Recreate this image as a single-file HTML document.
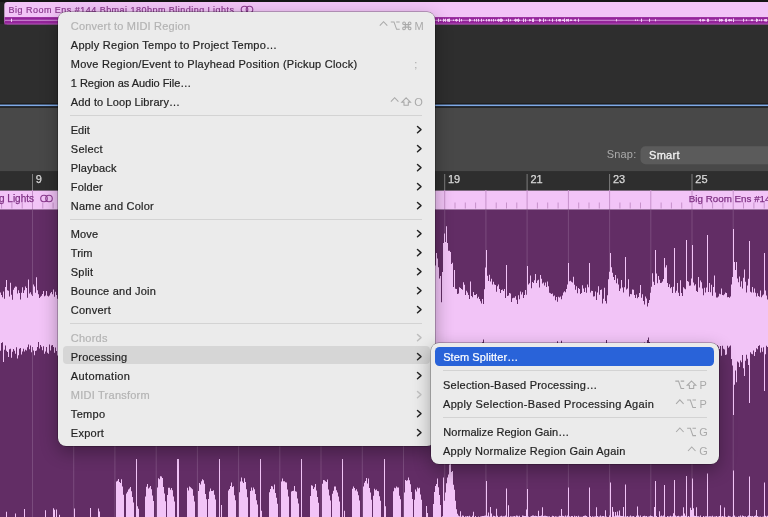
<!DOCTYPE html>
<html><head><meta charset="utf-8">
<style>
*{margin:0;padding:0;box-sizing:border-box}
html,body{width:768px;height:517px;overflow:hidden;background:#2c2c2c;font-family:"Liberation Sans",sans-serif}
.abs{position:absolute;left:0;top:0}
svg text{font-family:"Liberation Sans",sans-serif}
.menu{position:absolute;background:#ebebeb;border-radius:8px;box-shadow:0 0 0 0.5px rgba(0,0,0,0.45),0 6px 18px rgba(0,0,0,0.33)}
.hl{position:absolute;left:4.5px;right:4.5px;height:18.6px;background:#d6d6d6;border-radius:4px}
.sep{position:absolute;height:1px;background:#d3d3d3}
.blue{position:absolute;left:4px;right:4.5px;top:4.5px;height:18.7px;background:#2963d9;border-radius:4.5px}
</style></head><body>
<svg class="abs" width="768" height="517" viewBox="0 0 768 517" style="will-change:transform">
 <rect x="0" y="0" width="768" height="517" fill="#2e2e2e"/>
 <rect x="0" y="0" width="768" height="2.5" fill="#151515"/>
 <rect x="0" y="2" width="4" height="22" fill="#242424"/>
 <rect x="4.3" y="2" width="800" height="22.2" rx="3" fill="#f2c4f7"/>
 <rect x="4.5" y="17.1" width="800" height="7.2" fill="#94249a"/>
 <rect x="4.5" y="23.3" width="800" height="1" fill="#a948ae"/>
 <rect x="5" y="19.8" width="800" height="0.9" fill="#d8a0de"/>
 <g fill="#f2d2f5"><rect x="11" y="18.65" width="1" height="3.21"/><rect x="433" y="18.62" width="1" height="3.27"/><rect x="438" y="18.65" width="1" height="3.20"/><rect x="440" y="19.57" width="1" height="1.35"/><rect x="443" y="18.69" width="1" height="3.12"/><rect x="444" y="19.47" width="1" height="1.56"/><rect x="445" y="18.73" width="1" height="3.05"/><rect x="447" y="18.91" width="1" height="2.67"/><rect x="448" y="18.79" width="1" height="2.92"/><rect x="449" y="18.59" width="1" height="3.31"/><rect x="453" y="19.56" width="1" height="1.38"/><rect x="455" y="19.41" width="1" height="1.67"/><rect x="456" y="18.92" width="1" height="2.67"/><rect x="457" y="19.60" width="1" height="1.30"/><rect x="459" y="18.50" width="1" height="3.50"/><rect x="461" y="19.10" width="1" height="2.30"/><rect x="469" y="18.79" width="1" height="2.93"/><rect x="470" y="19.29" width="1" height="1.92"/><rect x="474" y="19.15" width="1" height="2.20"/><rect x="476" y="18.91" width="1" height="2.68"/><rect x="478" y="18.90" width="1" height="2.71"/><rect x="481" y="18.80" width="1" height="2.90"/><rect x="483" y="19.58" width="1" height="1.35"/><rect x="486" y="19.10" width="1" height="2.30"/><rect x="488" y="19.21" width="1" height="2.07"/><rect x="489" y="19.21" width="1" height="2.09"/><rect x="491" y="19.20" width="1" height="2.11"/><rect x="493" y="18.97" width="1" height="2.57"/><rect x="495" y="19.38" width="1" height="1.73"/><rect x="497" y="19.43" width="1" height="1.65"/><rect x="498" y="18.81" width="1" height="2.88"/><rect x="499" y="19.26" width="1" height="1.97"/><rect x="500" y="18.65" width="1" height="3.20"/><rect x="501" y="18.62" width="1" height="3.25"/><rect x="502" y="19.25" width="1" height="2.01"/><rect x="506" y="19.50" width="1" height="1.49"/><rect x="508" y="18.68" width="1" height="3.14"/><rect x="510" y="19.32" width="1" height="1.87"/><rect x="514" y="19.49" width="1" height="1.51"/><rect x="515" y="18.70" width="1" height="3.11"/><rect x="516" y="19.23" width="1" height="2.03"/><rect x="517" y="19.15" width="1" height="2.21"/><rect x="518" y="18.55" width="1" height="3.41"/><rect x="519" y="19.64" width="1" height="1.21"/><rect x="523" y="18.51" width="1" height="3.48"/><rect x="525" y="18.76" width="1" height="2.99"/><rect x="529" y="19.24" width="1" height="2.02"/><rect x="530" y="19.57" width="1" height="1.36"/><rect x="532" y="18.68" width="1" height="3.14"/><rect x="533" y="18.57" width="1" height="3.37"/><rect x="539" y="18.76" width="1" height="2.99"/><rect x="540" y="19.29" width="1" height="1.92"/><rect x="543" y="18.52" width="1" height="3.45"/><rect x="545" y="19.35" width="1" height="1.81"/><rect x="549" y="19.41" width="1" height="1.67"/><rect x="552" y="18.70" width="1" height="3.10"/><rect x="556" y="18.90" width="1" height="2.71"/><rect x="558" y="19.32" width="1" height="1.85"/><rect x="559" y="19.02" width="1" height="2.47"/><rect x="560" y="19.08" width="1" height="2.33"/><rect x="562" y="19.58" width="1" height="1.33"/><rect x="563" y="19.50" width="1" height="1.50"/><rect x="564" y="18.48" width="1" height="3.54"/><rect x="566" y="19.05" width="1" height="2.41"/><rect x="567" y="19.27" width="1" height="1.95"/><rect x="568" y="18.87" width="1" height="2.75"/><rect x="570" y="19.42" width="1" height="1.66"/><rect x="571" y="19.50" width="1" height="1.50"/><rect x="574" y="19.55" width="1" height="1.39"/><rect x="575" y="19.20" width="1" height="2.10"/><rect x="578" y="18.69" width="1" height="3.12"/><rect x="616" y="19.14" width="1" height="2.22"/><rect x="635" y="19.48" width="1" height="1.54"/><rect x="637" y="19.54" width="1" height="1.42"/><rect x="641" y="18.64" width="1" height="3.22"/><rect x="649" y="18.73" width="1" height="3.04"/><rect x="655" y="19.26" width="1" height="1.98"/><rect x="699" y="19.43" width="1" height="1.63"/><rect x="700" y="18.91" width="1" height="2.68"/><rect x="702" y="19.21" width="1" height="2.08"/><rect x="703" y="19.23" width="1" height="2.04"/><rect x="704" y="19.55" width="1" height="1.40"/><rect x="707" y="18.75" width="1" height="2.99"/><rect x="708" y="18.82" width="1" height="2.86"/><rect x="715" y="19.53" width="1" height="1.43"/><rect x="719" y="18.79" width="1" height="2.93"/><rect x="720" y="19.33" width="1" height="1.84"/><rect x="721" y="18.95" width="1" height="2.61"/><rect x="722" y="19.37" width="1" height="1.76"/><rect x="725" y="18.80" width="1" height="2.89"/><rect x="726" y="18.63" width="1" height="3.25"/><rect x="728" y="19.39" width="1" height="1.72"/><rect x="729" y="19.07" width="1" height="2.35"/><rect x="730" y="19.44" width="1" height="1.61"/><rect x="731" y="19.26" width="1" height="1.97"/><rect x="733" y="18.46" width="1" height="3.58"/><rect x="743" y="18.77" width="1" height="2.96"/><rect x="746" y="19.37" width="1" height="1.76"/><rect x="751" y="19.42" width="1" height="1.66"/><rect x="752" y="19.43" width="1" height="1.65"/><rect x="756" y="18.61" width="1" height="3.28"/><rect x="757" y="19.14" width="1" height="2.22"/><rect x="759" y="19.54" width="1" height="1.42"/><rect x="761" y="19.22" width="1" height="2.06"/><rect x="764" y="19.25" width="1" height="2.00"/><rect x="765" y="19.07" width="1" height="2.37"/><rect x="766" y="18.95" width="1" height="2.60"/></g>
 <text x="8.6" y="12.9" font-size="9" fill="#8b3a8f" stroke="#8b3a8f" stroke-width="0.2" textLength="225.4" lengthAdjust="spacing">Big Room Ens #144 Bbmaj 180bpm Blinding Lights</text>
 <g fill="none" stroke="#8b3a8f" stroke-width="1.1"><circle cx="244.5" cy="9.5" r="3.3"/><circle cx="249.5" cy="9.5" r="3.3"/></g>
 <rect x="0" y="103.6" width="768" height="4.2" fill="#0c0c0c"/>
 <rect x="0" y="104.5" width="768" height="1.7" fill="#80aae6"/>
 <rect x="0" y="107.6" width="768" height="63.8" fill="#484848"/>
 <text x="606.7" y="158.3" font-size="11" fill="#ababab" letter-spacing="0.2">Snap:</text>
 <rect x="640.5" y="146.2" width="200" height="18.1" rx="5" fill="#5b5b5b"/>
 <text x="649" y="158.6" font-size="11" fill="#f2f2f2" letter-spacing="0.3" stroke="#f2f2f2" stroke-width="0.3">Smart</text>
 <rect x="0" y="171.4" width="768" height="18.6" fill="#2e2e2e"/>
 <rect x="32.0" y="174" width="1" height="16" fill="#7d7d7d"/><text x="35.8" y="182.8" font-size="11" fill="#dadada" stroke="#dadada" stroke-width="0.25">9</text><rect x="114.4" y="174" width="1" height="16" fill="#7d7d7d"/><text x="118.2" y="182.8" font-size="11" fill="#dadada" stroke="#dadada" stroke-width="0.25">11</text><rect x="196.9" y="174" width="1" height="16" fill="#7d7d7d"/><text x="200.7" y="182.8" font-size="11" fill="#dadada" stroke="#dadada" stroke-width="0.25">13</text><rect x="279.3" y="174" width="1" height="16" fill="#7d7d7d"/><text x="283.1" y="182.8" font-size="11" fill="#dadada" stroke="#dadada" stroke-width="0.25">15</text><rect x="361.8" y="174" width="1" height="16" fill="#7d7d7d"/><text x="365.6" y="182.8" font-size="11" fill="#dadada" stroke="#dadada" stroke-width="0.25">17</text><rect x="444.2" y="174" width="1" height="16" fill="#7d7d7d"/><text x="448.0" y="182.8" font-size="11" fill="#dadada" stroke="#dadada" stroke-width="0.25">19</text><rect x="526.6" y="174" width="1" height="16" fill="#7d7d7d"/><text x="530.4" y="182.8" font-size="11" fill="#dadada" stroke="#dadada" stroke-width="0.25">21</text><rect x="609.1" y="174" width="1" height="16" fill="#7d7d7d"/><text x="612.9" y="182.8" font-size="11" fill="#dadada" stroke="#dadada" stroke-width="0.25">23</text><rect x="691.5" y="174" width="1" height="16" fill="#7d7d7d"/><text x="695.3" y="182.8" font-size="11" fill="#dadada" stroke="#dadada" stroke-width="0.25">25</text><rect x="774.0" y="174" width="1" height="16" fill="#7d7d7d"/><text x="777.8" y="182.8" font-size="11" fill="#dadada" stroke="#dadada" stroke-width="0.25">27</text>
 <rect x="0" y="190.6" width="768" height="19.1" fill="#f2c4f7"/>
 <g fill="#c691ca"><rect x="-9.2" y="190" width="1" height="19"/><rect x="1.1" y="202.5" width="1" height="6"/><rect x="11.4" y="202.5" width="1" height="6"/><rect x="21.7" y="202.5" width="1" height="6"/><rect x="32.0" y="190" width="1" height="19"/><rect x="42.3" y="202.5" width="1" height="6"/><rect x="52.6" y="202.5" width="1" height="6"/><rect x="62.9" y="202.5" width="1" height="6"/><rect x="73.2" y="190" width="1" height="19"/><rect x="83.5" y="202.5" width="1" height="6"/><rect x="93.8" y="202.5" width="1" height="6"/><rect x="104.1" y="202.5" width="1" height="6"/><rect x="114.4" y="190" width="1" height="19"/><rect x="124.7" y="202.5" width="1" height="6"/><rect x="135.1" y="202.5" width="1" height="6"/><rect x="145.4" y="202.5" width="1" height="6"/><rect x="155.7" y="190" width="1" height="19"/><rect x="166.0" y="202.5" width="1" height="6"/><rect x="176.3" y="202.5" width="1" height="6"/><rect x="186.6" y="202.5" width="1" height="6"/><rect x="196.9" y="190" width="1" height="19"/><rect x="207.2" y="202.5" width="1" height="6"/><rect x="217.5" y="202.5" width="1" height="6"/><rect x="227.8" y="202.5" width="1" height="6"/><rect x="238.1" y="190" width="1" height="19"/><rect x="248.4" y="202.5" width="1" height="6"/><rect x="258.7" y="202.5" width="1" height="6"/><rect x="269.0" y="202.5" width="1" height="6"/><rect x="279.3" y="190" width="1" height="19"/><rect x="289.6" y="202.5" width="1" height="6"/><rect x="299.9" y="202.5" width="1" height="6"/><rect x="310.2" y="202.5" width="1" height="6"/><rect x="320.5" y="190" width="1" height="19"/><rect x="330.8" y="202.5" width="1" height="6"/><rect x="341.1" y="202.5" width="1" height="6"/><rect x="351.5" y="202.5" width="1" height="6"/><rect x="361.8" y="190" width="1" height="19"/><rect x="372.1" y="202.5" width="1" height="6"/><rect x="382.4" y="202.5" width="1" height="6"/><rect x="392.7" y="202.5" width="1" height="6"/><rect x="403.0" y="190" width="1" height="19"/><rect x="413.3" y="202.5" width="1" height="6"/><rect x="423.6" y="202.5" width="1" height="6"/><rect x="433.9" y="202.5" width="1" height="6"/><rect x="444.2" y="190" width="1" height="19"/><rect x="454.5" y="202.5" width="1" height="6"/><rect x="464.8" y="202.5" width="1" height="6"/><rect x="475.1" y="202.5" width="1" height="6"/><rect x="485.4" y="190" width="1" height="19"/><rect x="495.7" y="202.5" width="1" height="6"/><rect x="506.0" y="202.5" width="1" height="6"/><rect x="516.3" y="202.5" width="1" height="6"/><rect x="526.6" y="190" width="1" height="19"/><rect x="536.9" y="202.5" width="1" height="6"/><rect x="547.2" y="202.5" width="1" height="6"/><rect x="557.6" y="202.5" width="1" height="6"/><rect x="567.9" y="190" width="1" height="19"/><rect x="578.2" y="202.5" width="1" height="6"/><rect x="588.5" y="202.5" width="1" height="6"/><rect x="598.8" y="202.5" width="1" height="6"/><rect x="609.1" y="190" width="1" height="19"/><rect x="619.4" y="202.5" width="1" height="6"/><rect x="629.7" y="202.5" width="1" height="6"/><rect x="640.0" y="202.5" width="1" height="6"/><rect x="650.3" y="190" width="1" height="19"/><rect x="660.6" y="202.5" width="1" height="6"/><rect x="670.9" y="202.5" width="1" height="6"/><rect x="681.2" y="202.5" width="1" height="6"/><rect x="691.5" y="190" width="1" height="19"/><rect x="701.8" y="202.5" width="1" height="6"/><rect x="712.1" y="202.5" width="1" height="6"/><rect x="722.4" y="202.5" width="1" height="6"/><rect x="732.7" y="190" width="1" height="19"/><rect x="743.0" y="202.5" width="1" height="6"/><rect x="753.4" y="202.5" width="1" height="6"/><rect x="763.7" y="202.5" width="1" height="6"/><rect x="774.0" y="190" width="1" height="19"/><rect x="784.3" y="202.5" width="1" height="6"/><rect x="794.6" y="202.5" width="1" height="6"/><rect x="804.9" y="202.5" width="1" height="6"/></g>
 <text x="-1" y="202.3" font-size="10" fill="#7f3084" stroke="#7f3084" stroke-width="0.25">g Lights</text>
 <g fill="none" stroke="#8b3a8f" stroke-width="1.1"><circle cx="44" cy="198.5" r="3.3"/><circle cx="49" cy="198.5" r="3.3"/></g>
 <text x="688.8" y="202.3" font-size="9.8" fill="#7f3084" stroke="#7f3084" stroke-width="0.25" >Big Room Ens #144</text>
 <rect x="0" y="209.7" width="768" height="308" fill="#622d65"/>
 <g fill="#7a4b7d"><rect x="-9.2" y="209.7" width="1" height="308"/><rect x="32.0" y="209.7" width="1" height="308"/><rect x="73.2" y="209.7" width="1" height="308"/><rect x="114.4" y="209.7" width="1" height="308"/><rect x="155.7" y="209.7" width="1" height="308"/><rect x="196.9" y="209.7" width="1" height="308"/><rect x="238.1" y="209.7" width="1" height="308"/><rect x="279.3" y="209.7" width="1" height="308"/><rect x="320.5" y="209.7" width="1" height="308"/><rect x="361.8" y="209.7" width="1" height="308"/><rect x="403.0" y="209.7" width="1" height="308"/><rect x="444.2" y="209.7" width="1" height="308"/><rect x="485.4" y="209.7" width="1" height="308"/><rect x="526.6" y="209.7" width="1" height="308"/><rect x="567.9" y="209.7" width="1" height="308"/><rect x="609.1" y="209.7" width="1" height="308"/><rect x="650.3" y="209.7" width="1" height="308"/><rect x="691.5" y="209.7" width="1" height="308"/><rect x="732.7" y="209.7" width="1" height="308"/><rect x="774.0" y="209.7" width="1" height="308"/></g>
 <path d="M0 292.5H1V295.0H2V297.3H3V291.5H4V298.7H5V287.1H6V280.1H7V290.2H8V290.7H9V296.5H10V282.7H11V294.8H12V299.7H13V289.7H14V287.8H15V286.5H16V286.8H17V293.5H18V290.2H19V293.1H20V299.5H21V292.7H22V287.2H23V292.9H24V290.2H25V286.6H26V288.1H27V297.7H28V279.4H29V293.5H30V292.3H31V294.5H32V296.0H33V284.4H34V286.4H35V292.8H36V277.3H37V290.3H38V294.2H39V297.9H40V296.7H41V295.8H42V293.9H43V290.9H44V296.2H45V295.6H46V291.0H47V295.8H48V296.6H49V295.5H50V293.3H51V291.9H52V294.3H53V289.5H54V296.8H55V291.8H56V295.1H57V298.8H58V299.5H59V297.5H60V292.7H61V289.2H62V294.5H63V299.0H64V290.7H65V296.6H66V296.6H67V298.7H68V297.2H69V294.7H70V289.1H71V297.6H72V292.3H73V297.4H74V271.4H75V268.7H76V274.9H77V275.2H78V265.6H79V271.5H80V293.5H81V299.6H82V300.3H83V296.8H84V297.7H85V296.7H86V291.6H87V300.8H88V295.4H89V292.8H90V299.3H91V290.0H92V295.6H93V294.8H94V298.7H95V298.6H96V293.0H97V290.7H98V295.2H99V299.1H100V300.3H101V300.4H102V291.7H103V292.5H104V296.7H105V299.1H106V292.7H107V299.1H108V291.5H109V300.6H110V295.9H111V295.4H112V296.3H113V300.6H114V293.8H115V270.8H116V272.3H117V270.5H118V275.5H119V267.2H120V265.5H121V298.8H122V294.7H123V291.3H124V300.1H125V298.4H126V291.3H127V297.2H128V293.3H129V290.3H130V290.5H131V292.0H132V295.4H133V293.5H134V295.4H135V291.5H136V296.7H137V299.2H138V299.3H139V297.9H140V299.8H141V292.8H142V291.6H143V299.7H144V291.9H145V292.1H146V299.0H147V298.5H148V293.8H149V289.2H150V297.2H151V300.6H152V295.1H153V295.0H154V291.3H155V290.3H156V295.6H157V270.8H158V266.2H159V274.1H160V275.1H161V264.7H162V269.5H163V292.9H164V295.2H165V296.2H166V297.4H167V291.2H168V297.9H169V291.3H170V295.2H171V299.7H172V297.5H173V296.6H174V296.2H175V300.8H176V292.1H177V297.9H178V298.8H179V299.8H180V297.3H181V298.2H182V297.7H183V293.1H184V289.1H185V296.7H186V291.8H187V297.0H188V296.9H189V295.4H190V301.0H191V297.4H192V300.8H193V296.4H194V292.1H195V289.6H196V293.5H197V292.0H198V270.6H199V275.6H200V275.9H201V273.7H202V271.2H203V264.5H204V290.9H205V291.0H206V296.3H207V300.3H208V295.3H209V293.4H210V296.9H211V292.4H212V292.6H213V291.9H214V290.9H215V293.7H216V298.0H217V300.9H218V289.9H219V294.2H220V300.7H221V295.3H222V297.7H223V300.7H224V296.2H225V296.5H226V291.4H227V295.3H228V294.3H229V294.5H230V296.0H231V298.3H232V301.0H233V297.8H234V290.4H235V298.4H236V293.3H237V297.2H238V296.1H239V273.0H240V267.0H241V275.0H242V264.5H243V267.3H244V271.5H245V295.5H246V290.0H247V295.6H248V293.5H249V291.5H250V297.9H251V289.9H252V298.7H253V298.2H254V294.1H255V298.7H256V296.8H257V292.9H258V298.0H259V294.1H260V290.2H261V289.9H262V295.8H263V297.2H264V298.3H265V291.6H266V290.0H267V297.7H268V292.4H269V293.3H270V293.4H271V297.5H272V300.0H273V300.0H274V298.6H275V292.8H276V300.2H277V292.0H278V293.4H279V293.7H280V266.3H281V273.6H282V274.0H283V266.1H284V274.6H285V264.3H286V295.5H287V300.6H288V298.7H289V295.6H290V290.0H291V297.8H292V290.0H293V290.7H294V296.8H295V291.6H296V295.3H297V293.7H298V300.6H299V294.9H300V297.7H301V300.0H302V298.9H303V299.2H304V299.0H305V300.5H306V295.3H307V298.6H308V294.0H309V297.9H310V293.5H311V291.5H312V292.5H313V289.7H314V290.4H315V298.3H316V289.7H317V296.0H318V289.4H319V291.2H320V291.8H321V296.1H322V266.2H323V266.1H324V267.7H325V273.8H326V267.1H327V275.0H328V295.6H329V294.8H330V289.6H331V298.6H332V295.3H333V292.3H334V296.9H335V289.1H336V293.5H337V297.6H338V290.9H339V292.9H340V299.4H341V296.6H342V292.2H343V290.8H344V289.0H345V299.2H346V290.0H347V297.6H348V294.8H349V300.5H350V299.3H351V298.5H352V300.0H353V298.9H354V295.5H355V290.9H356V292.7H357V289.9H358V294.6H359V293.3H360V290.3H361V294.5H362V299.0H363V264.1H364V272.5H365V270.8H366V264.1H367V273.6H368V271.4H369V293.5H370V292.6H371V293.7H372V292.1H373V297.8H374V300.3H375V297.7H376V298.9H377V290.7H378V297.1H379V291.2H380V299.0H381V290.1H382V290.9H383V293.9H384V300.0H385V295.1H386V298.2H387V293.6H388V293.9H389V293.8H390V300.8H391V296.9H392V289.2H393V293.1H394V290.3H395V295.1H396V298.9H397V290.9H398V299.8H399V293.2H400V290.7H401V300.8H402V297.6H403V291.4H404V271.5H405V265.0H406V270.9H407V268.0H408V268.3H409V265.5H410V290.6H411V295.5H412V295.7H413V299.9H414V298.8H415V290.5H416V292.5H417V291.9H418V299.0H419V295.6H420V289.4H421V300.8H422V296.9H423V297.1H424V293.6H425V298.6H426V291.4H427V290.7H428V295.8H429V295.2H430V295.8H431V296.7H432V297.1H433V300.5H434V294.7H435V265.6H436V253.0H437V258.6H438V267.3H439V278.6H440V276.0H441V302.3H442V272.0H443V243.0H444V233.4H445V242.1H446V226.2H447V243.0H448V250.7H449V250.7H450V252.0H451V264.0H452V262.8H453V287.0H454V269.9H455V288.8H456V289.0H457V293.9H458V293.4H459V287.2H460V287.9H461V289.0H462V289.8H463V282.3H464V284.7H465V295.0H466V290.7H467V292.5H468V295.1H469V298.9H470V281.6H471V295.9H472V297.2H473V292.0H474V294.9H475V294.9H476V294.0H477V298.2H478V296.7H479V299.1H480V301.3H481V303.6H482V299.1H483V304.1H484V289.2H485V267.4H486V250.0H487V275.8H488V280.9H489V274.8H490V281.4H491V278.8H492V284.6H493V281.8H494V284.5H495V285.1H496V291.8H497V286.3H498V284.6H499V289.1H500V292.9H501V289.9H502V289.4H503V290.9H504V288.9H505V298.1H506V265.0H507V296.1H508V295.4H509V292.9H510V293.6H511V302.0H512V298.3H513V297.8H514V297.8H515V296.3H516V299.7H517V304.0H518V295.2H519V299.2H520V291.5H521V294.4H522V292.2H523V298.0H524V295.0H525V290.0H526V294.7H527V266.0H528V284.4H529V283.3H530V275.4H531V288.3H532V282.0H533V283.1H534V280.3H535V273.9H536V282.9H537V280.4H538V279.8H539V287.4H540V275.0H541V278.8H542V283.4H543V282.6H544V285.5H545V282.4H546V287.0H547V281.5H548V286.2H549V292.8H550V293.3H551V294.0H552V293.6H553V296.2H554V295.6H555V300.2H556V297.1H557V301.8H558V296.7H559V297.6H560V296.5H561V299.3H562V295.4H563V292.4H564V291.2H565V292.2H566V288.9H567V284.5H568V263.0H569V281.3H570V280.7H571V281.7H572V282.5H573V276.8H574V284.7H575V289.8H576V286.3H577V293.2H578V287.9H579V288.9H580V294.0H581V292.9H582V285.2H583V288.4H584V292.1H585V287.7H586V292.8H587V284.4H588V287.2H589V263.0H590V292.4H591V290.7H592V291.0H593V296.5H594V296.3H595V291.5H596V299.9H597V292.4H598V286.2H599V294.7H600V290.0H601V289.6H602V303.6H603V298.8H604V287.8H605V300.9H606V303.6H607V295.3H608V279.3H609V271.7H610V253.0H611V267.3H612V272.7H613V277.0H614V280.1H615V275.0H616V283.3H617V278.6H618V284.5H619V290.9H620V288.5H621V280.1H622V287.5H623V292.4H624V287.2H625V257.0H626V289.4H627V288.4H628V279.3H629V296.4H630V294.1H631V294.2H632V289.6H633V289.7H634V295.0H635V297.9H636V294.4H637V298.2H638V296.9H639V292.9H640V284.9H641V297.8H642V294.3H643V301.0H644V304.4H645V296.6H646V298.6H647V306.5H648V303.1H649V300.0H650V292.7H651V286.7H652V273.3H653V281.8H654V284.9H655V250.0H656V273.5H657V283.3H658V275.9H659V279.7H660V282.9H661V282.7H662V281.5H663V279.1H664V258.0H665V267.4H666V265.3H667V282.9H668V287.1H669V284.2H670V288.3H671V286.9H672V293.0H673V286.8H674V248.0H675V292.8H676V290.7H677V282.9H678V292.8H679V296.1H680V280.2H681V293.0H682V296.0H683V287.2H684V288.6H685V289.2H686V240.0H687V281.1H688V281.7H689V285.8H690V285.5H691V278.6H692V245.0H693V282.5H694V285.4H695V284.3H696V291.1H697V292.1H698V276.9H699V287.4H700V280.4H701V282.2H702V288.5H703V295.2H704V287.7H705V292.6H706V287.6H707V235.0H708V291.9H709V283.0H710V292.3H711V284.7H712V295.7H713V287.0H714V275.4H715V292.4H716V297.5H717V297.5H718V296.4H719V293.8H720V294.3H721V288.6H722V295.0H723V295.2H724V294.3H725V292.6H726V293.1H727V297.2H728V297.0H729V297.7H730V296.6H731V284.4H732V276.9H733V229.0H734V261.9H735V270.0H736V262.1H737V278.6H738V282.2H739V276.5H740V286.8H741V281.2H742V288.5H743V277.7H744V269.4H745V281.8H746V292.5H747V285.6H748V278.7H749V241.0H750V291.7H751V292.4H752V287.1H753V292.4H754V288.6H755V292.7H756V296.4H757V293.3H758V296.0H759V296.8H760V290.6H761V297.2H762V295.6H763V294.6H764V253.0H765V290.4H766V295.5H767V299.5H768V346.9H767V345.7H766V354.2H765V391.0H764V347.3H763V351.7H762V347.8H761V352.4H760V345.3H759V346.1H758V349.3H757V348.2H756V351.9H755V356.1H754V350.4H753V354.3H752V353.8H751V352.2H750V403.0H749V365.1H748V358.7H747V354.8H746V360.7H745V376.0H744V368.2H743V355.1H742V362.3H741V360.5H740V366.9H739V362.4H738V361.6H737V382.3H736V370.4H735V384.7H734V415.0H733V365.4H732V359.0H731V345.4H730V346.5H729V347.7H728V345.8H727V354.6H726V355.1H725V349.6H724V348.7H723V345.8H722V355.8H721V346.1H720V349.1H719V346.5H718V344.9H717V346.5H716V354.7H715V367.2H714V353.7H713V351.1H712V357.7H711V348.9H710V363.6H709V355.8H708V409.0H707V353.6H706V354.2H705V355.9H704V348.1H703V353.9H702V358.8H701V362.0H700V356.9H699V370.6H698V348.9H697V355.4H696V360.7H695V355.2H694V358.6H693V399.0H692V364.6H691V360.2H690V357.3H689V366.1H688V361.4H687V404.0H686V358.0H685V357.1H684V353.5H683V348.4H682V353.6H681V361.9H680V345.8H679V349.5H678V359.4H677V354.1H676V354.7H675V396.0H674V355.5H673V352.6H672V357.2H671V358.2H670V357.0H669V355.8H668V365.1H667V379.6H666V376.4H665V386.0H664V365.9H663V358.6H662V358.9H661V362.2H660V360.8H659V370.9H658V357.6H657V369.3H656V394.0H655V359.5H654V364.6H653V373.0H652V355.6H651V351.6H650V342.0H649V337.4H648V339.9H647V346.6H646V347.3H645V342.5H644V344.9H643V353.7H642V349.6H641V358.7H640V351.7H639V346.2H638V345.5H637V346.5H636V347.2H635V349.9H634V353.3H633V358.3H632V348.4H631V348.1H630V346.8H629V364.2H628V354.1H627V358.2H626V387.0H625V356.2H624V348.4H623V356.9H622V365.9H621V358.7H620V354.2H619V360.8H618V363.2H617V364.0H616V368.2H615V367.8H614V369.5H613V373.7H612V372.8H611V391.0H610V374.3H609V361.7H608V346.1H607V339.9H606V346.6H605V357.5H604V347.6H603V343.3H602V354.3H601V357.2H600V348.3H599V356.0H598V347.8H597V344.0H596V349.4H595V350.1H594V346.7H593V353.9H592V356.0H591V350.6H590V381.0H589V358.7H588V356.6H587V354.7H586V355.7H585V355.7H584V351.7H583V360.2H582V353.8H581V349.4H580V357.9H579V354.7H578V352.5H577V357.8H576V357.1H575V361.5H574V368.9H573V358.5H572V360.9H571V363.6H570V361.6H569V381.0H568V363.3H567V356.9H566V350.6H565V355.4H564V351.9H563V346.5H562V340.7H561V345.3H560V350.2H559V347.3H558V341.3H557V345.1H556V344.8H555V351.9H554V351.4H553V347.9H552V350.6H551V346.9H550V351.0H549V354.2H548V361.4H547V357.4H546V358.8H545V355.3H544V358.7H543V357.9H542V363.8H541V368.1H540V354.5H539V365.6H538V367.0H537V364.9H536V371.1H535V362.5H534V363.9H533V363.7H532V352.9H531V366.7H530V360.1H529V360.4H528V378.0H527V351.4H526V350.6H525V345.2H524V348.1H523V349.0H522V351.3H521V350.5H520V343.0H519V345.4H518V342.9H517V343.9H516V345.4H515V346.6H514V343.9H513V348.5H512V345.1H511V352.0H510V352.3H509V349.5H508V346.8H507V379.0H506V343.7H505V359.1H504V351.5H503V357.7H502V356.0H501V355.0H500V351.3H499V358.4H498V360.3H497V350.2H496V355.6H495V359.7H494V358.6H493V357.3H492V365.7H491V365.0H490V368.7H489V360.3H488V368.8H487V394.0H486V374.4H485V357.1H484V339.4H483V342.2H482V344.0H481V345.4H480V347.1H479V348.4H478V345.8H477V352.0H476V353.0H475V349.5H474V354.0H473V344.8H472V344.5H471V362.0H470V343.4H469V347.3H468V354.6H467V355.6H466V346.4H465V357.7H464V365.2H463V357.1H462V356.8H461V353.6H460V360.8H459V350.3H458V347.7H457V353.4H456V359.0H455V372.6H454V357.7H453V383.7H452V378.4H451V395.6H450V390.1H449V395.3H448V401.0H447V421.5H446V401.1H445V410.9H444V401.0H443V368.5H442V343.7H441V371.3H440V368.7H439V376.9H438V384.9H437V391.0H436V380.5H435V350.3H434V344.5H433V343.4H432V342.7H431V346.5H430V346.4H429V344.9H428V352.1H427V352.3H426V340.5H425V351.3H424V349.3H423V345.2H422V347.6H421V351.4H420V344.2H419V341.9H418V352.8H417V355.5H416V356.8H415V346.2H414V349.0H413V345.9H412V349.1H411V357.4H410V383.2H409V375.3H408V380.3H407V375.1H406V376.4H405V369.5H404V357.1H403V349.8H402V343.3H401V355.4H400V350.8H399V344.6H398V355.8H397V346.2H396V351.8H395V352.5H394V352.4H393V353.1H392V348.2H391V346.1H390V352.2H389V345.2H388V348.7H387V349.0H386V350.3H385V343.2H384V345.8H383V349.4H382V351.2H381V345.9H380V351.9H379V349.0H378V349.3H377V341.0H376V344.6H375V344.3H374V344.5H373V348.9H372V352.0H371V349.8H370V350.9H369V370.5H368V367.5H367V384.8H366V372.8H365V368.9H364V378.6H363V346.6H362V354.1H361V352.7H360V352.6H359V351.5H358V352.1H357V349.4H356V356.4H355V348.7H354V342.2H353V339.9H352V344.7H351V342.7H350V344.4H349V348.9H348V342.4H347V351.7H346V348.1H345V358.2H344V355.9H343V352.1H342V352.3H341V344.7H340V348.7H339V349.7H338V347.5H337V353.5H336V354.6H335V344.5H334V356.6H333V348.8H332V344.2H331V358.9H330V346.4H329V353.0H328V367.4H327V380.7H326V370.0H325V376.7H324V380.5H323V375.6H322V345.1H321V354.3H320V350.0H319V350.7H318V352.1H317V353.8H316V342.5H315V355.1H314V352.4H313V356.2H312V351.8H311V347.2H310V351.0H309V346.4H308V344.6H307V350.8H306V344.9H305V348.9H304V347.8H303V346.8H302V343.1H301V348.4H300V349.4H299V345.1H298V348.6H297V351.4H296V355.0H295V344.7H294V355.7H293V355.3H292V350.1H291V349.8H290V351.3H289V341.0H288V344.9H287V349.1H286V379.9H285V367.2H284V380.5H283V370.6H282V370.8H281V378.3H280V349.1H279V349.2H278V350.6H277V347.7H276V350.2H275V343.4H274V343.4H273V348.4H272V347.2H271V346.8H270V353.0H269V348.0H268V348.2H267V352.1H266V354.1H265V341.5H264V344.8H263V348.1H262V349.9H261V357.6H260V348.6H259V350.3H258V351.6H257V352.0H256V344.0H255V347.5H254V342.9H253V346.5H252V350.3H251V349.4H250V350.9H249V350.3H248V349.7H247V355.7H246V344.2H245V368.5H244V376.0H243V375.1H242V372.8H241V381.8H240V367.9H239V349.2H238V347.4H237V348.4H236V346.8H235V357.6H234V343.6H233V347.6H232V346.0H231V347.2H230V347.2H229V351.4H228V344.9H227V348.1H226V347.1H225V343.9H224V346.4H223V346.0H222V353.1H221V340.8H220V349.6H219V358.2H218V347.6H217V341.5H216V354.3H215V355.7H214V347.5H213V346.6H212V353.8H211V347.7H210V348.5H209V349.7H208V342.9H207V343.3H206V352.9H205V352.8H204V383.8H203V375.4H202V366.0H201V369.4H200V369.1H199V373.5H198V356.0H197V346.5H196V351.3H195V350.9H194V350.0H193V338.5H192V349.2H191V344.4H190V347.5H189V347.8H188V345.4H187V356.7H186V348.6H185V353.4H184V350.6H183V342.0H182V344.9H181V349.3H180V348.0H179V344.3H178V348.8H177V356.0H176V346.3H175V347.8H174V346.5H173V350.2H172V347.3H171V344.0H170V349.3H169V345.2H168V352.4H167V350.0H166V342.9H165V348.1H164V350.7H163V377.1H162V383.8H161V364.8H160V374.8H159V374.8H158V369.6H157V348.5H156V349.1H155V348.4H154V350.8H153V351.5H152V339.5H151V350.9H150V351.8H149V352.0H148V341.8H147V344.2H146V347.9H145V354.4H144V340.7H143V357.4H142V355.4H141V342.3H140V349.2H139V342.0H138V345.9H137V347.6H136V353.9H135V345.2H134V349.6H133V348.0H132V349.0H131V353.6H130V356.1H129V351.9H128V345.0H127V349.9H126V340.9H125V340.2H124V353.9H123V347.5H122V349.2H121V377.8H120V376.5H119V372.8H118V372.7H117V367.4H116V373.2H115V353.2H114V343.5H113V343.0H112V348.6H111V345.1H110V343.6H109V356.0H108V348.9H107V350.1H106V345.5H105V347.6H104V353.8H103V352.6H102V339.5H101V343.6H100V346.8H99V351.0H98V349.8H97V353.9H96V342.1H95V340.9H94V344.4H93V351.1H92V353.4H91V343.2H90V355.3H89V351.5H88V348.0H87V356.4H86V349.5H85V349.5H84V344.2H83V343.3H82V347.4H81V351.2H80V376.6H79V378.0H78V371.0H77V365.0H76V378.2H75V375.2H74V346.8H73V350.2H72V343.2H71V354.6H70V346.1H69V343.8H68V349.9H67V349.0H66V346.9H65V348.8H64V342.4H63V344.8H62V351.1H61V354.2H60V347.2H59V339.9H58V355.6H57V350.9H56V347.4H55V352.7H54V346.9H53V345.0H52V345.4H51V350.6H50V344.6H49V353.7H48V352.8H47V347.0H46V351.4H45V353.8H44V346.3H43V350.3H42V346.8H41V345.0H40V348.4H39V342.0H38V347.0H37V350.6H36V350.9H35V355.2H34V350.6H33V347.0H32V352.3H31V345.6H30V349.3H29V344.4H28V347.2H27V350.4H26V349.8H25V351.4H24V348.7H23V351.4H22V354.4H21V348.0H20V348.7H19V355.3H18V358.4H17V347.2H16V353.8H15V350.7H14V349.0H13V351.8H12V357.7H11V348.8H10V349.3H9V356.9H8V351.9H7V350.7H6V345.6H5V349.7H4V362.0H3V342.2H2V342.9H1V350.7H0Z" fill="#f2c4f7"/>
 <path d="M0 520V517.0H1V517.0H2V517.0H3V517.0H4V517.0H5V517.0H6V511.7H7V517.0H8V517.0H9V517.0H10V517.0H11V517.0H12V517.0H13V517.0H14V517.0H15V513.5H16V517.0H17V517.0H18V517.0H19V517.0H20V517.0H21V517.0H22V517.0H23V517.0H24V508.9H25V517.0H26V517.0H27V517.0H28V517.0H29V517.0H30V517.0H31V517.0H32V517.0H33V517.0H34V517.0H35V517.0H36V517.0H37V517.0H38V517.0H39V517.0H40V517.0H41V517.0H42V517.0H43V517.0H44V517.0H45V510.3H46V517.0H47V517.0H48V517.0H49V517.0H50V517.0H51V517.0H52V517.0H53V508.2H54V509.8H55V517.0H56V509.5H57V517.0H58V517.0H59V514.7H60V517.0H61V517.0H62V517.0H63V517.0H64V517.0H65V517.0H66V517.0H67V517.0H68V517.0H69V517.0H70V517.0H71V517.0H72V517.0H73V517.0H74V508.4H75V517.0H76V517.0H77V517.0H78V517.0H79V517.0H80V517.0H81V517.0H82V517.0H83V517.0H84V517.0H85V517.0H86V517.0H87V517.0H88V517.0H89V517.0H90V508.1H91V517.0H92V517.0H93V517.0H94V517.0H95V517.0H96V517.0H97V517.0H98V508.6H99V511.5H100V517.0H101V517.0H102V517.0H103V517.0H104V517.0H105V517.0H106V517.0H107V517.0H108V517.0H109V517.0H110V517.0H111V517.0H112V517.0H113V517.0H114V517.0H115V517.0H116V481.6H117V480.7H118V479.1H119V482.0H120V483.0H121V479.3H122V486.6H123V494.8H124V517.0H125V517.0H126V493.6H127V491.8H128V489.4H129V488.5H130V487.1H131V491.3H132V497.0H133V502.4H134V517.0H135V517.0H136V459.0H137V506.3H138V508.7H139V517.0H140V517.0H141V517.0H142V517.0H143V517.0H144V517.0H145V496.4H146V486.8H147V483.9H148V488.5H149V487.6H150V486.1H151V489.2H152V495.6H153V501.1H154V517.0H155V517.0H156V517.0H157V487.4H158V478.2H159V479.3H160V476.3H161V476.6H162V477.9H163V487.0H164V493.6H165V501.2H166V517.0H167V494.9H168V487.7H169V487.8H170V489.8H171V487.9H172V490.2H173V496.5H174V501.5H175V517.0H176V517.0H177V459.0H178V459.0H179V517.0H180V517.0H181V517.0H182V517.0H183V517.0H184V517.0H185V517.0H186V517.0H187V487.7H188V490.4H189V486.4H190V487.3H191V488.2H192V489.3H193V495.7H194V501.5H195V517.0H196V517.0H197V517.0H198V491.0H199V483.0H200V484.5H201V481.2H202V479.2H203V480.3H204V483.7H205V494.0H206V499.2H207V517.0H208V498.9H209V491.4H210V488.6H211V491.1H212V491.1H213V490.3H214V494.8H215V499.5H216V517.0H217V517.0H218V517.0H219V459.0H220V517.0H221V505.1H222V517.0H223V517.0H224V517.0H225V517.0H226V517.0H227V517.0H228V490.4H229V488.9H230V486.0H231V482.4H232V486.9H233V486.3H234V495.3H235V500.2H236V517.0H237V517.0H238V517.0H239V492.2H240V481.6H241V477.5H242V481.4H243V483.0H244V478.3H245V481.9H246V489.2H247V497.2H248V517.0H249V517.0H250V490.9H251V487.4H252V490.6H253V487.4H254V489.3H255V494.0H256V500.3H257V504.6H258V517.0H259V517.0H260V459.0H261V510.8H262V517.0H263V517.0H264V517.0H265V517.0H266V517.0H267V517.0H268V517.0H269V492.3H270V489.0H271V486.0H272V486.6H273V489.3H274V484.5H275V493.1H276V497.7H277V503.7H278V517.0H279V517.0H280V517.0H281V481.5H282V478.4H283V481.3H284V481.3H285V482.3H286V482.5H287V489.4H288V496.4H289V517.0H290V517.0H291V491.5H292V491.0H293V490.8H294V486.0H295V491.2H296V491.7H297V498.4H298V503.5H299V517.0H300V517.0H301V459.0H302V517.0H303V517.0H304V517.0H305V517.0H306V517.0H307V517.0H308V517.0H309V517.0H310V495.9H311V485.3H312V485.8H313V489.1H314V487.2H315V483.9H316V490.4H317V496.9H318V502.8H319V517.0H320V517.0H321V517.0H322V483.8H323V480.0H324V480.2H325V481.2H326V481.9H327V479.5H328V489.6H329V495.4H330V500.5H331V517.0H332V493.7H333V490.7H334V486.6H335V486.5H336V490.2H337V492.5H338V496.5H339V501.5H340V517.0H341V517.0H342V459.0H343V517.0H344V510.8H345V517.0H346V517.0H347V517.0H348V517.0H349V517.0H350V517.0H351V517.0H352V488.8H353V486.6H354V487.9H355V490.5H356V489.2H357V491.6H358V495.3H359V500.6H360V517.0H361V517.0H362V517.0H363V486.4H364V482.8H365V480.9H366V478.1H367V483.4H368V478.6H369V487.9H370V492.6H371V499.7H372V517.0H373V495.8H374V488.8H375V490.3H376V489.6H377V490.9H378V491.3H379V496.2H380V500.7H381V517.0H382V517.0H383V517.0H384V459.0H385V506.2H386V517.0H387V517.0H388V517.0H389V517.0H390V517.0H391V517.0H392V517.0H393V491.3H394V487.8H395V488.2H396V486.4H397V487.6H398V487.4H399V495.8H400V499.3H401V517.0H402V517.0H403V517.0H404V492.5H405V480.1H406V480.8H407V480.2H408V477.6H409V480.2H410V484.3H411V492.1H412V499.0H413V517.0H414V499.8H415V489.6H416V491.4H417V487.4H418V488.4H419V487.7H420V494.5H421V499.8H422V517.0H423V517.0H424V517.0H425V517.0H426V505.9H427V512.9H428V517.0H429V517.0H430V517.0H431V517.0H432V517.0H433V504.0H434V491.9H435V486.0H436V484.0H437V478.6H438V487.2H439V495.1H440V505.0H441V517.0H442V516.3H443V477.5H444V500.8H445V492.6H446V483.2H447V477.5H448V474.5H449V464.4H450V464.0H451V471.9H452V471.1H453V484.7H454V489.7H455V500.7H456V509.2H457V513.7H458V515.5H459V516.2H460V511.2H461V516.8H462V515.6H463V515.7H464V517.0H465V516.3H466V516.4H467V515.9H468V516.5H469V515.8H470V516.8H471V516.9H472V515.8H473V511.8H474V516.9H475V516.1H476V516.9H477V516.9H478V516.6H479V516.9H480V516.5H481V516.2H482V516.0H483V516.1H484V515.8H485V515.6H486V481.0H487V515.8H488V512.5H489V516.6H490V507.1H491V513.5H492V516.8H493V515.7H494V516.1H495V516.4H496V508.7H497V515.8H498V516.9H499V516.7H500V516.3H501V515.8H502V516.5H503V516.3H504V516.3H505V515.6H506V488.5H507V516.8H508V505.2H509V517.0H510V516.3H511V516.4H512V516.6H513V516.2H514V515.9H515V516.5H516V515.5H517V515.7H518V516.4H519V515.8H520V516.9H521V516.9H522V515.6H523V515.8H524V516.0H525V516.1H526V509.4H527V489.0H528V516.4H529V517.0H530V516.4H531V515.9H532V515.5H533V515.6H534V516.0H535V515.8H536V516.1H537V516.2H538V510.8H539V516.1H540V515.9H541V515.6H542V507.2H543V516.0H544V515.7H545V515.7H546V516.1H547V516.2H548V516.6H549V516.2H550V517.0H551V516.7H552V515.7H553V516.1H554V516.8H555V516.2H556V516.4H557V516.7H558V516.6H559V515.7H560V516.1H561V508.9H562V515.8H563V515.9H564V516.4H565V515.6H566V516.6H567V515.6H568V487.5H569V516.2H570V516.7H571V516.1H572V516.0H573V516.9H574V515.7H575V516.5H576V516.0H577V516.7H578V515.7H579V516.8H580V516.8H581V516.8H582V516.8H583V515.9H584V515.8H585V515.6H586V516.1H587V516.8H588V516.9H589V487.5H590V516.0H591V516.9H592V516.2H593V516.8H594V516.4H595V516.3H596V507.2H597V515.9H598V516.8H599V516.5H600V515.6H601V516.6H602V516.0H603V516.1H604V516.5H605V510.2H606V516.6H607V516.9H608V516.9H609V515.5H610V482.5H611V516.9H612V507.1H613V511.7H614V516.3H615V512.0H616V515.5H617V511.5H618V515.6H619V510.5H620V515.8H621V516.1H622V516.0H623V507.1H624V516.4H625V484.5H626V516.4H627V515.9H628V516.8H629V516.4H630V515.5H631V516.4H632V516.3H633V516.0H634V516.7H635V516.9H636V515.7H637V506.5H638V515.6H639V516.8H640V515.6H641V517.0H642V516.4H643V515.9H644V515.8H645V516.2H646V515.9H647V516.8H648V516.4H649V516.3H650V515.6H651V516.1H652V516.2H653V516.8H654V507.1H655V481.0H656V516.1H657V516.9H658V516.9H659V511.3H660V516.3H661V515.6H662V516.2H663V515.6H664V485.0H665V516.8H666V516.9H667V515.9H668V516.4H669V516.6H670V515.8H671V516.5H672V516.2H673V513.2H674V480.0H675V515.5H676V516.6H677V515.9H678V515.8H679V516.4H680V516.6H681V515.7H682V515.7H683V507.3H684V513.6H685V515.8H686V476.0H687V516.8H688V516.1H689V516.7H690V507.8H691V509.9H692V478.5H693V508.2H694V515.7H695V515.9H696V507.2H697V516.2H698V516.3H699V516.7H700V515.6H701V516.9H702V516.9H703V516.1H704V516.7H705V516.3H706V516.3H707V473.5H708V516.6H709V516.2H710V516.2H711V516.4H712V515.7H713V516.8H714V516.5H715V516.6H716V516.0H717V516.8H718V516.5H719V516.1H720V505.3H721V516.4H722V515.9H723V516.4H724V507.5H725V516.4H726V516.9H727V516.7H728V515.8H729V516.2H730V516.4H731V517.0H732V516.6H733V470.5H734V515.6H735V516.8H736V516.8H737V516.9H738V516.2H739V516.6H740V515.5H741V516.7H742V515.6H743V516.0H744V516.5H745V516.2H746V516.9H747V516.3H748V515.6H749V476.5H750V515.9H751V516.3H752V516.1H753V516.7H754V515.9H755V515.5H756V510.0H757V516.1H758V516.8H759V516.8H760V516.6H761V516.9H762V516.8H763V516.5H764V482.5H765V515.7H766V516.6H767V515.7H768V520Z" fill="#f2c4f7"/>
</svg>

<div class="menu" style="left:58.3px;top:11.6px;width:376.6px;height:434px">
<div class="hl" style="top:334.3px"></div><div class="sep" style="left:12.2px;right:12.5px;top:103.7px"></div><div class="sep" style="left:12.2px;right:12.5px;top:207.7px"></div><div class="sep" style="left:12.2px;right:12.5px;top:311.5px"></div>
</div>

<div class="menu" style="left:431px;top:342.6px;width:287.5px;height:121.4px">
 <div class="blue"></div>
 <div class="sep" style="left:11.5px;right:12px;top:27.3px"></div>
 <div class="sep" style="left:11.5px;right:12px;top:74.9px"></div>
</div>
<svg class="abs" width="768" height="517" viewBox="0 0 768 517" style="will-change:transform">
 <text x="70.8" y="29.7" font-size="11" fill="#b3b3b3" stroke="#b3b3b3" stroke-width="0.2" textLength="119.2" lengthAdjust="spacing">Convert to MIDI Region</text><text x="70.8" y="48.7" font-size="11" fill="#232323" stroke="#232323" stroke-width="0.2" textLength="206.3" lengthAdjust="spacing">Apply Region Tempo to Project Tempo…</text><text x="70.8" y="67.7" font-size="11" fill="#232323" stroke="#232323" stroke-width="0.2" textLength="286.3" lengthAdjust="spacing">Move Region/Event to Playhead Position (Pickup Clock)</text><text x="70.8" y="86.7" font-size="11" fill="#232323" stroke="#232323" stroke-width="0.2" textLength="120.5" lengthAdjust="spacing">1 Region as Audio File…</text><text x="70.8" y="105.7" font-size="11" fill="#232323" stroke="#232323" stroke-width="0.2" textLength="109.2" lengthAdjust="spacing">Add to Loop Library…</text><text x="70.8" y="133.7" font-size="11" fill="#232323" stroke="#232323" stroke-width="0.2" textLength="18.9" lengthAdjust="spacing">Edit</text><path d="M417.5 126.5 L421.0 129.6 L417.5 132.7" fill="none" stroke="#242424" stroke-width="1.45" stroke-linecap="round" stroke-linejoin="round"/><text x="70.8" y="152.7" font-size="11" fill="#232323" stroke="#232323" stroke-width="0.2" textLength="31.8" lengthAdjust="spacing">Select</text><path d="M417.5 145.5 L421.0 148.6 L417.5 151.7" fill="none" stroke="#242424" stroke-width="1.45" stroke-linecap="round" stroke-linejoin="round"/><text x="70.8" y="171.7" font-size="11" fill="#232323" stroke="#232323" stroke-width="0.2" textLength="45.6" lengthAdjust="spacing">Playback</text><path d="M417.5 164.5 L421.0 167.6 L417.5 170.7" fill="none" stroke="#242424" stroke-width="1.45" stroke-linecap="round" stroke-linejoin="round"/><text x="70.8" y="190.7" font-size="11" fill="#232323" stroke="#232323" stroke-width="0.2" textLength="31.8" lengthAdjust="spacing">Folder</text><path d="M417.5 183.5 L421.0 186.6 L417.5 189.7" fill="none" stroke="#242424" stroke-width="1.45" stroke-linecap="round" stroke-linejoin="round"/><text x="70.8" y="209.7" font-size="11" fill="#232323" stroke="#232323" stroke-width="0.2" textLength="82.9" lengthAdjust="spacing">Name and Color</text><path d="M417.5 202.5 L421.0 205.6 L417.5 208.7" fill="none" stroke="#242424" stroke-width="1.45" stroke-linecap="round" stroke-linejoin="round"/><text x="70.8" y="237.7" font-size="11" fill="#232323" stroke="#232323" stroke-width="0.2" textLength="27.2" lengthAdjust="spacing">Move</text><path d="M417.5 230.5 L421.0 233.6 L417.5 236.7" fill="none" stroke="#242424" stroke-width="1.45" stroke-linecap="round" stroke-linejoin="round"/><text x="70.8" y="256.7" font-size="11" fill="#232323" stroke="#232323" stroke-width="0.2" textLength="21.7" lengthAdjust="spacing">Trim</text><path d="M417.5 249.5 L421.0 252.6 L417.5 255.7" fill="none" stroke="#242424" stroke-width="1.45" stroke-linecap="round" stroke-linejoin="round"/><text x="70.8" y="275.7" font-size="11" fill="#232323" stroke="#232323" stroke-width="0.2" textLength="22.2" lengthAdjust="spacing">Split</text><path d="M417.5 268.5 L421.0 271.6 L417.5 274.7" fill="none" stroke="#242424" stroke-width="1.45" stroke-linecap="round" stroke-linejoin="round"/><text x="70.8" y="294.7" font-size="11" fill="#232323" stroke="#232323" stroke-width="0.2" textLength="85.1" lengthAdjust="spacing">Bounce and Join</text><path d="M417.5 287.5 L421.0 290.6 L417.5 293.7" fill="none" stroke="#242424" stroke-width="1.45" stroke-linecap="round" stroke-linejoin="round"/><text x="70.8" y="313.7" font-size="11" fill="#232323" stroke="#232323" stroke-width="0.2" textLength="40.0" lengthAdjust="spacing">Convert</text><path d="M417.5 306.5 L421.0 309.6 L417.5 312.7" fill="none" stroke="#242424" stroke-width="1.45" stroke-linecap="round" stroke-linejoin="round"/><text x="70.8" y="341.7" font-size="11" fill="#b3b3b3" stroke="#b3b3b3" stroke-width="0.2" textLength="36.6" lengthAdjust="spacing">Chords</text><path d="M417.5 334.5 L421.0 337.6 L417.5 340.7" fill="none" stroke="#bdbdbd" stroke-width="1.45" stroke-linecap="round" stroke-linejoin="round"/><text x="70.8" y="360.7" font-size="11" fill="#232323" stroke="#232323" stroke-width="0.2" textLength="56.4" lengthAdjust="spacing">Processing</text><path d="M417.5 353.5 L421.0 356.6 L417.5 359.7" fill="none" stroke="#242424" stroke-width="1.45" stroke-linecap="round" stroke-linejoin="round"/><text x="70.8" y="379.7" font-size="11" fill="#232323" stroke="#232323" stroke-width="0.2" textLength="59.1" lengthAdjust="spacing">Automation</text><path d="M417.5 372.5 L421.0 375.6 L417.5 378.7" fill="none" stroke="#242424" stroke-width="1.45" stroke-linecap="round" stroke-linejoin="round"/><text x="70.8" y="398.7" font-size="11" fill="#b3b3b3" stroke="#b3b3b3" stroke-width="0.2" textLength="78.9" lengthAdjust="spacing">MIDI Transform</text><path d="M417.5 391.5 L421.0 394.6 L417.5 397.7" fill="none" stroke="#bdbdbd" stroke-width="1.45" stroke-linecap="round" stroke-linejoin="round"/><text x="70.8" y="417.7" font-size="11" fill="#232323" stroke="#232323" stroke-width="0.2" textLength="34.4" lengthAdjust="spacing">Tempo</text><path d="M417.5 410.5 L421.0 413.6 L417.5 416.7" fill="none" stroke="#242424" stroke-width="1.45" stroke-linecap="round" stroke-linejoin="round"/><text x="70.8" y="436.7" font-size="11" fill="#232323" stroke="#232323" stroke-width="0.2" textLength="33.1" lengthAdjust="spacing">Export</text><path d="M417.5 429.5 L421.0 432.6 L417.5 435.7" fill="none" stroke="#242424" stroke-width="1.45" stroke-linecap="round" stroke-linejoin="round"/>
 <text x="443.2" y="361.0" font-size="11" fill="#ffffff" stroke="#ffffff" stroke-width="0.2" textLength="75.0" lengthAdjust="spacing">Stem Splitter…</text><text x="443.0" y="389.0" font-size="11" fill="#232323" stroke="#232323" stroke-width="0.2" textLength="154.2" lengthAdjust="spacing">Selection-Based Processing…</text><text x="443.0" y="407.8" font-size="11" fill="#232323" stroke="#232323" stroke-width="0.2" textLength="210.9" lengthAdjust="spacing">Apply Selection-Based Processing Again</text><text x="443.3" y="435.9" font-size="11" fill="#232323" stroke="#232323" stroke-width="0.2" textLength="125.9" lengthAdjust="spacing">Normalize Region Gain…</text><text x="443.0" y="454.8" font-size="11" fill="#232323" stroke="#232323" stroke-width="0.2" textLength="182.3" lengthAdjust="spacing">Apply Normalize Region Gain Again</text>
 <g fill="none" stroke="#a9a9a9" stroke-width="1.05" stroke-linejoin="miter"><path d="M379.8 25.7 L383.55 21.7 L387.3 25.7" /><path d="M390.8 21.9 H394.0 L396.6 29.3 H399.7 M396.2 21.9 H399.7" /><path d="M405.40000000000003 24.6 H408.3 V27.099999999999998 H405.40000000000003 Z M405.40000000000003 24.6 V23.200000000000003 A1.35 1.35 0 1 0 404.00000000000006 24.6 H405.40000000000003 M408.3 24.6 V23.200000000000003 A1.35 1.35 0 1 1 409.7 24.6 H408.3 M405.40000000000003 27.099999999999998 V28.499999999999996 A1.35 1.35 0 1 1 404.00000000000006 27.099999999999998 H405.40000000000003 M408.3 27.099999999999998 V28.499999999999996 A1.35 1.35 0 1 0 409.7 27.099999999999998 H408.3" /><text x="414.6" y="29.7" stroke="none" fill="#a9a9a9" font-size="11">M</text><path d="M390.9 101.7 L394.65 97.7 L398.4 101.7" /><path d="M406.15 97.8 L410.5 102.10000000000001 H408.3 V105.3 H404.0 V102.10000000000001 H401.8 Z" /><text x="414.3" y="105.7" stroke="none" fill="#a9a9a9" font-size="11">O</text><text x="414.2" y="67.7" stroke="none" fill="#a9a9a9" font-size="11">;</text><path d="M675.3 381.09999999999997 H678.5 L681.0999999999999 388.5 H684.1999999999999 M680.6999999999999 381.09999999999997 H684.1999999999999" /><path d="M691.55 381.0 L695.9 385.29999999999995 H693.6999999999999 V388.5 H689.4 V385.29999999999995 H687.1999999999999 Z" /><text x="699.6" y="388.9" stroke="none" fill="#a9a9a9" font-size="11">P</text><path d="M676.1 403.8 L679.85 399.8 L683.6 403.8" /><path d="M687.1 400.0 H690.3000000000001 L692.9 407.40000000000003 H696.0 M692.5 400.0 H696.0" /><text x="699.6" y="407.8" stroke="none" fill="#a9a9a9" font-size="11">P</text><path d="M676.1 432.0 L679.85 428.0 L683.6 432.0" /><path d="M687.1 428.2 H690.3000000000001 L692.9 435.6 H696.0 M692.5 428.2 H696.0" /><text x="699.2" y="436.0" stroke="none" fill="#a9a9a9" font-size="11">G</text><path d="M688.0 451.0 L691.75 447.0 L695.5 451.0" /><text x="699.2" y="455.0" stroke="none" fill="#a9a9a9" font-size="11">G</text></g>
</svg>
</body></html>
